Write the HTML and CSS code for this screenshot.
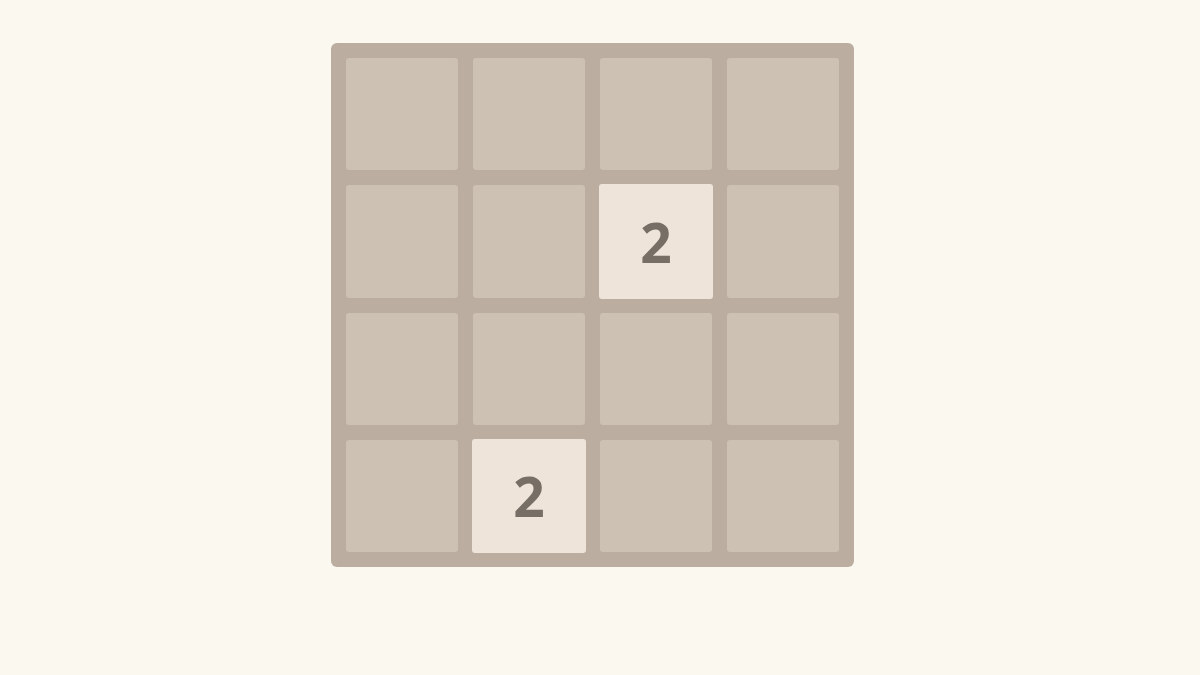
FILE: index.html
```html
<!DOCTYPE html>
<html lang="en">
<head>
<meta charset="utf-8">
<title>2048</title>
<link rel="stylesheet" href="styles.css">
</head>
<body>
<main class="page">
  <div class="board">
    <div class="cell"></div>
    <div class="cell"></div>
    <div class="cell"></div>
    <div class="cell"></div>

    <div class="cell"></div>
    <div class="cell"></div>
    <div class="cell"><div class="tile tile-2">2</div></div>
    <div class="cell"></div>

    <div class="cell"></div>
    <div class="cell"></div>
    <div class="cell"></div>
    <div class="cell"></div>

    <div class="cell"></div>
    <div class="cell"><div class="tile tile-2">2</div></div>
    <div class="cell"></div>
    <div class="cell"></div>
  </div>
</main>
</body>
</html>
```

FILE: styles.css
```css
html, body {
  margin: 0;
  padding: 0;
  background: #faf8ef;
  font-family: "Open Sans", "Liberation Sans", Arial, sans-serif;
}

.page {
  display: flex;
  justify-content: center;
  padding: 43px 15px 0 0;
}

.board {
  display: grid;
  grid-template-columns: repeat(4, 112px);
  grid-template-rows: repeat(4, 112.25px);
  gap: 15px;
  padding: 15px;
  background: #bbada0;
  border-radius: 6px;
}

.cell {
  position: relative;
  background: #cdc1b4;
  border-radius: 3px;
}

.tile {
  position: absolute;
  inset: -1px;
  display: flex;
  align-items: center;
  justify-content: center;
  border-radius: 3px;
  font-weight: 700;
  font-size: 55px;
  line-height: 1;
}

.tile-2 {
  background: #eee4da;
  color: #776e65;
}
```
